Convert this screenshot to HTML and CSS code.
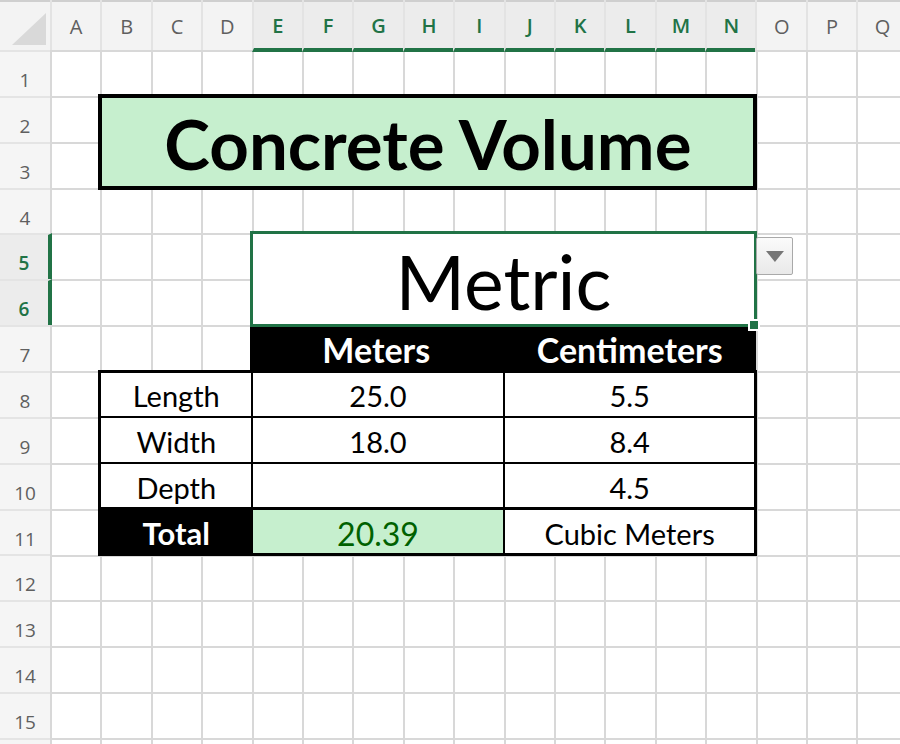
FILE: index.html
```html
<!DOCTYPE html>
<html lang="en">
<head>
  <meta charset="UTF-8">
  <meta name="viewport" content="width=device-width, initial-scale=1.0">
  <title>Concrete Volume - Sheet1</title>
  <link rel="stylesheet" href="styles.css">
</head>
<body>
  <div class="sheet">
    <div class="cells"></div>

    <!-- column headers -->
    <div class="corner"><span class="select-all"></span></div>
    <div class="col-head">A</div>
    <div class="col-head">B</div>
    <div class="col-head">C</div>
    <div class="col-head">D</div>
    <div class="col-head sel">E</div>
    <div class="col-head sel">F</div>
    <div class="col-head sel">G</div>
    <div class="col-head sel">H</div>
    <div class="col-head sel">I</div>
    <div class="col-head sel">J</div>
    <div class="col-head sel">K</div>
    <div class="col-head sel">L</div>
    <div class="col-head sel">M</div>
    <div class="col-head sel">N</div>
    <div class="col-head">O</div>
    <div class="col-head">P</div>
    <div class="col-head">Q</div>

    <!-- row headers (16 only peeks in at the bottom) -->
    <div class="row-head">1</div>
    <div class="row-head">2</div>
    <div class="row-head">3</div>
    <div class="row-head">4</div>
    <div class="row-head sel">5</div>
    <div class="row-head sel">6</div>
    <div class="row-head">7</div>
    <div class="row-head">8</div>
    <div class="row-head">9</div>
    <div class="row-head">10</div>
    <div class="row-head">11</div>
    <div class="row-head">12</div>
    <div class="row-head">13</div>
    <div class="row-head">14</div>
    <div class="row-head">15</div>
    <div class="row-head"></div>

    <!-- B2:N3 -->
    <div class="title">Concrete Volume</div>

    <!-- E5:N6, selected, with list validation -->
    <div class="unit-pick">
      Metric
      <span class="dropdown"><span class="arrow"></span></span>
      <span class="fill-handle"></span>
    </div>

    <!-- E7:N7 -->
    <div class="band">
      <span>Meters</span>
      <span>Centimeters</span>
    </div>

    <!-- B8:N11 -->
    <div class="calc">
      <div>Length</div>
      <div>25.0</div>
      <div>5.5</div>

      <div>Width</div>
      <div>18.0</div>
      <div>8.4</div>

      <div>Depth</div>
      <div></div>
      <div>4.5</div>

      <div class="total-label">Total</div>
      <div class="result">20.39</div>
      <div class="unit">Cubic Meters</div>
    </div>
  </div>
</body>
</html>
```

FILE: styles.css
```css
body {
  margin: 0;
  background: #fff;
  font-family: "Lato", "Open Sans", sans-serif;
  color: #000;
  overflow: hidden;
}
.sheet {
  display: grid;
  grid-template-columns: 50px repeat(17, 50.4px);
  grid-template-rows: 50px repeat(16, 45.87px);
  width: 900px;
  height: 744px;
  overflow: hidden;
}
.cells {
  grid-column: 2 / -1;
  grid-row: 2 / -1;
  background-image:
    repeating-linear-gradient(to right, #d8d8d8 0 2px, transparent 2px 50.4px),
    repeating-linear-gradient(to bottom, #d8d8d8 0 2px, transparent 2px 45.87px);
}

/* headers */
.corner {
  grid-column: 1;
  grid-row: 1;
  display: flex;
  justify-content: flex-end;
  align-items: flex-end;
  padding: 0 4px 5px 0;
  background: #f3f3f3;
  box-shadow: inset 0 2px #cfcfcf;
}
.select-all {
  width: 34px;
  height: 32px;
  background: #d9d9d9;
  clip-path: polygon(100% 0, 100% 100%, 0 100%);
}
.col-head {
  display: flex;
  align-items: center;
  justify-content: center;
  padding-top: 2px;
  background: #f3f3f3;
  border-left: 2px solid #e3e3e3;
  box-shadow: inset 0 2px #cfcfcf;
  font-family: "Open Sans", sans-serif;
  font-size: 20px;
  color: #5f5f5f;
}
.col-head.sel {
  color: #217346;
  font-weight: 600;
  background: #ececec;
  border-bottom: 4px solid #217346;
  margin-bottom: -2px;
}
.row-head {
  grid-column: 1;
  display: flex;
  align-items: center;
  justify-content: center;
  padding-top: 12px;
  background: #f5f5f5;
  border-top: 2px solid #e4e4e4;
  font-family: "Open Sans", sans-serif;
  font-size: 19px;
  color: #5f5f5f;
}
.row-head.sel {
  color: #217346;
  font-weight: 600;
  background: #ececec;
  border-right: 4px solid #217346;
  margin-right: -2px;
}

/* merged cells */
.title {
  grid-column: 3 / 16;
  grid-row: 3 / 5;
  margin: -2px;
  border: 4px solid #000;
  background: #c6efce;
  display: flex;
  align-items: center;
  justify-content: center;
  padding-top: 4px;
  font-size: 69px;
  font-weight: 700;
}
.unit-pick {
  grid-column: 6 / 16;
  grid-row: 6 / 8;
  margin: -2px;
  border: 3px solid #217346;
  background: #fff;
  position: relative;
  display: flex;
  align-items: center;
  justify-content: center;
  padding-top: 4px;
  font-size: 75px;
}
.dropdown {
  position: absolute;
  left: calc(100% + 2px);
  top: 3px;
  width: 35px;
  height: 36px;
  border: 1px solid #a9a9a9;
  border-radius: 2px;
  background: linear-gradient(#fbfbfb, #e9e9e9);
  display: flex;
  align-items: center;
  justify-content: center;
}
.arrow {
  width: 18px;
  height: 11px;
  background: #767676;
  clip-path: polygon(0 0, 100% 0, 50% 100%);
}
.fill-handle {
  position: absolute;
  right: -6px;
  bottom: -7px;
  width: 8px;
  height: 8px;
  background: #217346;
  border: 2px solid #fff;
  z-index: 2;
}
.band {
  grid-column: 6 / 16;
  grid-row: 8 / 9;
  margin: 2px -1px 0 -2px;
  background: #000;
  color: #fff;
  display: grid;
  grid-template-columns: 1fr 1fr;
  font-size: 34px;
  font-weight: 700;
}
.band span {
  display: flex;
  align-items: center;
  justify-content: center;
}
.calc {
  grid-column: 3 / 16;
  grid-row: 9 / 13;
  margin: -1.5px -2px -1.5px -2px;
  border: 3px solid #000;
  background: #000;
  display: grid;
  grid-template-columns: 3fr 5fr 5fr;
  grid-template-rows: repeat(4, 1fr);
  gap: 2px;
}
.calc div {
  background: #fff;
  display: flex;
  align-items: center;
  justify-content: center;
  padding-top: 3px;
  font-size: 29px;
}
.calc .total-label {
  background: #000;
  color: #fff;
  font-size: 31px;
  font-weight: 700;
}
.calc .result {
  margin-top: 1px;
  background: #c6efce;
  color: #006100;
  font-size: 32px;
}
.calc .unit {
  margin-top: 1px;
}
```
